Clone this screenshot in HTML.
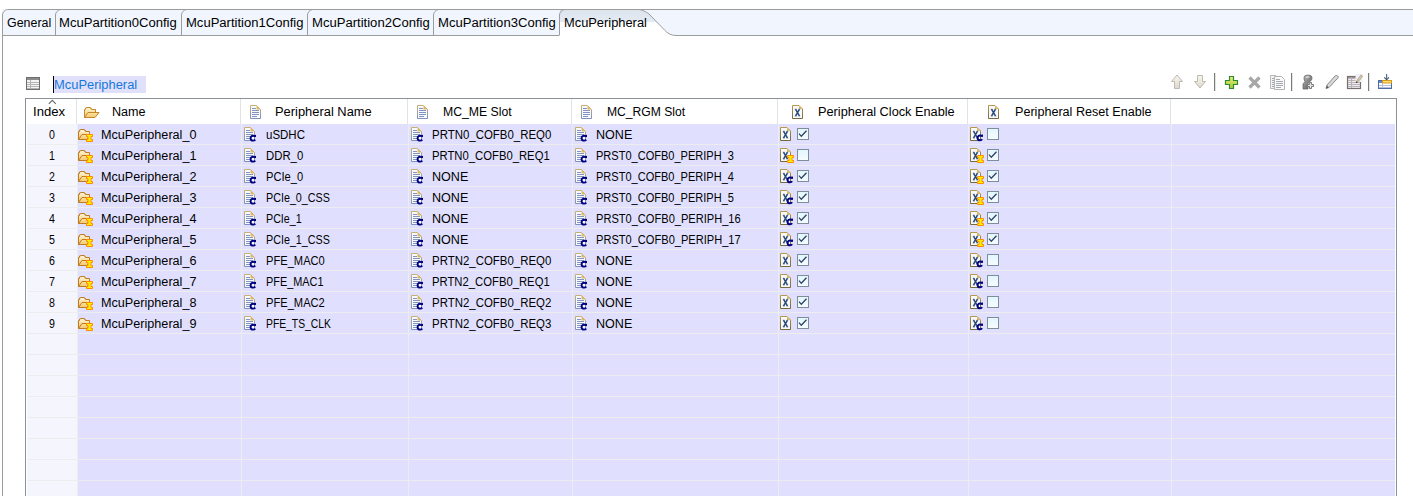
<!DOCTYPE html>
<html><head><meta charset="utf-8">
<style>
html,body{margin:0;padding:0;}
body{width:1413px;height:496px;overflow:hidden;background:#fff;position:relative;font-family:"Liberation Sans",sans-serif;font-size:12px;}
.t{position:absolute;white-space:pre;line-height:14px;height:14px;transform-origin:0 0;color:#000;}
.a{position:absolute;}
svg{position:absolute;overflow:visible;}
</style></head><body>

<svg width="0" height="0" style="position:absolute;left:0;top:0">
<defs>
<linearGradient id="fold" x1="0" y1="0" x2="0" y2="1"><stop offset="0" stop-color="#FFF8DC"/><stop offset="1" stop-color="#F0C060"/></linearGradient>
<linearGradient id="fold2" x1="0" y1="0" x2="0" y2="1"><stop offset="0" stop-color="#FBE3A0"/><stop offset="1" stop-color="#F2C870"/></linearGradient>
<linearGradient id="docb" x1="0" y1="0" x2="0" y2="1"><stop offset="0" stop-color="#C8B070"/><stop offset="1" stop-color="#8090B8"/></linearGradient>
<linearGradient id="xb" x1="0" y1="0" x2="0" y2="1"><stop offset="0" stop-color="#B89848"/><stop offset="1" stop-color="#7A6838"/></linearGradient>
<linearGradient id="cbg" x1="0" y1="0" x2="0" y2="1"><stop offset="0" stop-color="#E2F6FE"/><stop offset="1" stop-color="#F6FCFF"/></linearGradient>
<linearGradient id="arr" x1="0" y1="0" x2="0" y2="1"><stop offset="0" stop-color="#F8F6F0"/><stop offset="1" stop-color="#DCD8CC"/></linearGradient>
<linearGradient id="plusg" x1="0" y1="0" x2="0" y2="1"><stop offset="0" stop-color="#E8F070"/><stop offset="1" stop-color="#A8C838"/></linearGradient>
<linearGradient id="stampg" x1="0" y1="0" x2="1" y2="1"><stop offset="0" stop-color="#C0C0C0"/><stop offset="1" stop-color="#505050"/></linearGradient>

<g id="ibadge">
<path d="M0.5,0.5 H6.5 V2.5 H5 V5.5 H6.5 V7.5 H0.5 V5.5 H2 V2.5 H0.5 Z" fill="#FFF000" stroke="#FF8C00" stroke-width="1"/>
</g>
<g id="cbadge">
<path d="M5.6,1.9 C5.1,1.2 4.4,0.9 3.5,0.9 C2,0.9 1,1.9 1,3.3 C1,4.8 2,5.7 3.5,5.7 C4.4,5.7 5.1,5.4 5.6,4.7" fill="none" stroke="#000080" stroke-width="1.9"/>
<rect x="5" y="0" width="1.4" height="2.2" fill="#000080"/>
</g>
<g id="folderI">
<path d="M0.5,10.5 V2.5 H1.5 V1 H2.5 V0.5 H6.5 V1.5 H7.5 V2.5 H11.5 V5" fill="url(#fold)" stroke="#C07A20" stroke-width="1"/>
<path d="M0.5,10.5 L4,5.5 H12.5 L9,10.5 Z" fill="url(#fold2)" stroke="#C07A20" stroke-width="1"/>
<g transform="translate(8,5)"><use href="#ibadge"/></g>
</g>
<g id="folderO">
<path d="M0.5,10.5 V2.5 H1.5 V1 H2.5 V0.5 H6.5 V1.5 H7.5 V2.5 H11.5 V5" fill="url(#fold)" stroke="#C8862A" stroke-width="1"/>
<path d="M0.5,10.5 L4,5.5 H15 L11,10.5 Z" fill="url(#fold2)" stroke="#C8862A" stroke-width="1"/>
</g>
<g id="doc">
<path d="M0.5,0.5 H6.5 L10.5,4.5 V13.5 H0.5 Z" fill="#F8FAFF" stroke="url(#docb)" stroke-width="1"/>
<path d="M6.5,0.5 V4.5 H10.5 Z" fill="#E2B860"/>
<g fill="#8094C0"><rect x="2" y="3" width="4" height="1"/><rect x="2" y="5" width="7" height="1"/><rect x="2" y="7" width="7" height="1"/><rect x="2" y="9" width="7" height="1"/><rect x="2" y="11" width="5" height="1"/></g>
</g>
<g id="docc">
<use href="#doc"/>
<g transform="translate(5.6,7.9)"><use href="#cbadge"/></g>
</g>
<g id="xdoc">
<path d="M0.5,0.5 H7 L10.5,4 V13.5 H0.5 Z" fill="#F6FAFF" stroke="url(#xb)" stroke-width="1"/>
<path d="M7,0.5 V4 H10.5 Z" fill="#E0B860"/>
<path d="M3.6,4.4 L7.4,10.8 M7.4,4.4 L3.6,10.8" stroke="#2A4A78" stroke-width="1.5" fill="none"/><path d="M2.8,4.3 H4.6 M6.6,4.3 H8.2 M2.8,10.9 H4.6 M6.6,10.9 H8.2" stroke="#2A4A78" stroke-width="0.8"/>
</g>
<g id="xdocc">
<use href="#xdoc"/>
<g transform="translate(6.6,7.6)"><use href="#cbadge"/></g>
</g>
<g id="xdocI">
<use href="#xdoc"/>
<g transform="translate(7,7)"><use href="#ibadge"/></g>
</g>
<g id="cbox">
<rect x="0.5" y="0.5" width="11" height="11" fill="url(#cbg)" stroke="#7E8C9C" stroke-width="1"/>
</g>
<g id="cboxc">
<use href="#cbox"/>
<path d="M2,5.6 L4.3,8.3 L9.5,2.8" fill="none" stroke="#2C4464" stroke-width="1.3"/>
</g>
</defs></svg>

<svg width="1413" height="40" style="top:0;left:0">
<defs><linearGradient id="selg" x1="0" y1="0" x2="0" y2="1"><stop offset="0" stop-color="#DCE4EE"/><stop offset="1" stop-color="#E4EAF2"/></linearGradient></defs>
<rect x="2" y="9" width="1411" height="27" fill="#F1F6FE"/>
<path d="M559.5,36 L559.5,15 C559.5,12.5 561.5,10 564.5,9.5 L639,9.5 C642,10 645,11 649,14 L664.5,30 C667,33 671,35.5 676,35.5 L676,36 Z" fill="#fff"/>
<path d="M560,10 L639,10 C642,10.5 645,11.5 649,14.5 L657,22 L560,22 Z" fill="url(#selg)"/>
<g fill="none" stroke="#9C9C9C" stroke-width="1">
<path d="M2.5,496 L2.5,15 C2.5,12.5 4.5,10 7.5,9.5 L1413,9.5"/>
<path d="M55.5,35 L55.5,15 C55.5,12.5 57.5,10 60.5,9.5"/>
<path d="M181.5,35 L181.5,15 C181.5,12.5 183.5,10 186.5,9.5"/>
<path d="M307.5,35 L307.5,15 C307.5,12.5 309.5,10 312.5,9.5"/>
<path d="M433.5,35 L433.5,15 C433.5,12.5 435.5,10 438.5,9.5"/>
<path d="M559.5,35 L559.5,15 C559.5,12.5 561.5,10 564.5,9.5"/>
<path d="M639,9.5 C642,10 645,11 649,14 L664.5,30 C667,33 671,35.5 676,35.5 L1413,35.5"/>
<path d="M2.5,35.5 L559.5,35.5"/><path d="M559.5,35 V15"/>
</g>
</svg>
<svg width="16" height="16" style="left:26px;top:77px" shape-rendering="crispEdges">
<rect x="0.5" y="0.5" width="13" height="12" fill="#F4F4F4" stroke="#6E6E6E"/>
<rect x="1" y="1" width="12" height="2" fill="#8C8C8C"/>
<g fill="#B4B4B4"><rect x="1" y="5" width="12" height="1"/><rect x="1" y="7" width="12" height="1"/><rect x="1" y="9" width="12" height="1"/><rect x="1" y="11" width="12" height="1"/><rect x="4" y="3" width="1" height="9"/></g>
</svg>
<div class="a" style="left:54px;top:76px;width:92px;height:17px;background:#E0E0FA"></div>
<div class="a" style="left:53px;top:76px;width:1px;height:17px;background:#000"></div>

<svg style="left:1165px;top:70px" width="240" height="24">
<!-- up arrow at 1171..1183, y75..89 -->
<path d="M6.5,11.5 L12,5 L17.5,11.5 H14.5 V18.5 H9.5 V11.5 Z" fill="url(#arr)" stroke="#BEBAB0" stroke-width="1"/>
<!-- down arrow -->
<path d="M29.5,11.5 L35,18 L40.5,11.5 H37.5 V5.5 H32.5 V11.5 Z" fill="url(#arr)" stroke="#BEBAB0" stroke-width="1"/>
<rect x="49" y="3" width="1.2" height="18" fill="#7A7A7A"/>
<!-- plus 1225..1237, 76..88 -->
<path d="M64.5,6.5 H68.5 V10.5 H72.5 V14.5 H68.5 V18.5 H64.5 V14.5 H60.5 V10.5 H64.5 Z" fill="url(#plusg)" stroke="#2E8A3A" stroke-width="1.2"/>
<!-- gray X 1248..1261 -->
<path d="M84.5,7.5 L94.5,17.5 M94.5,7.5 L84.5,17.5" stroke="#A8A8A8" stroke-width="3.2" fill="none"/>
<!-- copy 1270..1285 -->
<path d="M5.5,5.5 H11 L13,7.5 V18.5 H5.5 Z" transform="translate(100,0)" fill="#F4F4F4" stroke="#B8B8B8"/>
<path d="M9.5,6.5 H16.5 L19.5,9.5 V19.5 H9.5 Z" transform="translate(100,0)" fill="#FAFAFA" stroke="#B4B4B4"/>
<g fill="#A4A8B0" transform="translate(100,0)"><rect x="7" y="8" width="2" height="1"/><rect x="7" y="10" width="2" height="1"/><rect x="7" y="12" width="2" height="1"/><rect x="7" y="14" width="2" height="1"/><rect x="7" y="16" width="2" height="1"/><rect x="11" y="9" width="4" height="1"/><rect x="11" y="11" width="7" height="1"/><rect x="11" y="13" width="7" height="1"/><rect x="11" y="15" width="7" height="1"/><rect x="11" y="17" width="5" height="1"/></g>
</svg>
<svg style="left:1285px;top:70px" width="120" height="24">
<rect x="6" y="3" width="1.2" height="18" fill="#7A7A7A"/>
<!-- stamp 1303..1315 -->
<path d="M19,7.5 Q19,5 23,5 Q27,5 27,7.5 Q27,10 25.5,11 L23,13.5 V19 H18 V14 L20,11.5 Q19,10.5 19,7.5 Z" fill="url(#stampg)" stroke="#6A6A6A" stroke-width="0.8"/>
<ellipse cx="22.5" cy="7" rx="2" ry="1.2" fill="#C8C8C8"/>
<path d="M24.5,12.5 H26.5 V14.5 H28.5 V16.5 H26.5 V18.5 H24.5 V16.5 H22.5 V14.5 H24.5 Z" fill="#E4E4E4" stroke="#7A7A7A" stroke-width="1"/>
<!-- pencil 1325..1338 -->
<path d="M41,18.5 L42,15 L50,6 C51,5 52.5,5.5 53,6.5 C53.5,7.5 53,8.5 52,9 L44,17.5 Z" fill="#D8D8D8" stroke="#8A8A8A" stroke-width="1"/>
<path d="M41,18.5 L42,15.6 L43.6,17.6 Z" fill="#505050"/>
<!-- table edit 1347..1362 -->
<rect x="62.5" y="6.5" width="13" height="12" fill="#ECECF6" stroke="#776E6E" stroke-width="1.2"/>
<rect x="63" y="7" width="8" height="1.6" fill="#A09494"/>
<g fill="#B8ACAC"><rect x="63" y="10" width="12" height="0.9"/><rect x="63" y="12" width="12" height="0.9"/><rect x="63" y="14" width="12" height="0.9"/><rect x="63" y="16" width="12" height="0.9"/><rect x="66" y="7" width="0.9" height="11"/></g>
<rect x="70.5" y="4" width="7" height="8" fill="#F0F0FA"/>
<path d="M71.5,12.3 L72.2,10 L76,5 L77.6,6.2 L73.8,11.2 Z" fill="#D8CCA8" stroke="#A09478" stroke-width="0.7"/>
<circle cx="71.6" cy="12.2" r="0.8" fill="#303030"/>
<rect x="83" y="3" width="1.2" height="18" fill="#7A7A7A"/>
<!-- import table 1378..1392, 74..89 -->
<rect x="101" y="4" width="1.2" height="5" fill="#50709A"/>
<path d="M99.2,7.4 L101.6,9.8 L104,7.4" stroke="#445468" stroke-width="1.1" fill="none"/>
<rect x="93.5" y="10.5" width="13" height="8" fill="#FFFFFF" stroke="#4E6CA4" stroke-width="1"/>
<rect x="94" y="11" width="3.5" height="2" fill="#6A88C0"/>
<rect x="97.5" y="10.5" width="9" height="2.5" fill="#F6E468" stroke="#D8961E" stroke-width="1"/>
<g fill="#B4C0D8"><rect x="94" y="15" width="12" height="1"/><rect x="94" y="17" width="12" height="1"/><rect x="97" y="13" width="1" height="5"/></g>
</svg>

<div class="a" style="left:25px;top:98px;width:1372px;height:398px;border:1px solid #8C9099;border-bottom:none;box-sizing:border-box;background:#fff"></div>
<div class="a" style="left:76px;top:99px;width:1px;height:25px;background:#E3E3E3"></div><div class="a" style="left:240px;top:99px;width:1px;height:25px;background:#E3E3E3"></div><div class="a" style="left:407px;top:99px;width:1px;height:25px;background:#E3E3E3"></div><div class="a" style="left:571px;top:99px;width:1px;height:25px;background:#E3E3E3"></div><div class="a" style="left:777px;top:99px;width:1px;height:25px;background:#E3E3E3"></div><div class="a" style="left:967px;top:99px;width:1px;height:25px;background:#E3E3E3"></div><div class="a" style="left:1170px;top:99px;width:1px;height:25px;background:#E3E3E3"></div><div class="a" style="left:27px;top:124px;width:50px;height:372px;background:#F5F5FE"></div><div class="a" style="left:78px;top:124px;width:1317px;height:372px;background:#E0E0FE"></div><div class="a" style="left:77px;top:124px;width:1px;height:372px;background:#EDEDEF"></div><div class="a" style="left:241px;top:124px;width:1px;height:372px;background:#EDEDEF"></div><div class="a" style="left:408px;top:124px;width:1px;height:372px;background:#EDEDEF"></div><div class="a" style="left:572px;top:124px;width:1px;height:372px;background:#EDEDEF"></div><div class="a" style="left:778px;top:124px;width:1px;height:372px;background:#EDEDEF"></div><div class="a" style="left:968px;top:124px;width:1px;height:372px;background:#EDEDEF"></div><div class="a" style="left:1171px;top:124px;width:1px;height:372px;background:#EDEDEF"></div><div class="a" style="left:27px;top:144px;width:1368px;height:1px;background:#EDEDEF"></div><div class="a" style="left:27px;top:165px;width:1368px;height:1px;background:#EDEDEF"></div><div class="a" style="left:27px;top:186px;width:1368px;height:1px;background:#EDEDEF"></div><div class="a" style="left:27px;top:207px;width:1368px;height:1px;background:#EDEDEF"></div><div class="a" style="left:27px;top:228px;width:1368px;height:1px;background:#EDEDEF"></div><div class="a" style="left:27px;top:249px;width:1368px;height:1px;background:#EDEDEF"></div><div class="a" style="left:27px;top:270px;width:1368px;height:1px;background:#EDEDEF"></div><div class="a" style="left:27px;top:291px;width:1368px;height:1px;background:#EDEDEF"></div><div class="a" style="left:27px;top:312px;width:1368px;height:1px;background:#EDEDEF"></div><div class="a" style="left:27px;top:333px;width:1368px;height:1px;background:#EDEDEF"></div><div class="a" style="left:27px;top:354px;width:1368px;height:1px;background:#EDEDEF"></div><div class="a" style="left:27px;top:375px;width:1368px;height:1px;background:#EDEDEF"></div><div class="a" style="left:27px;top:396px;width:1368px;height:1px;background:#EDEDEF"></div><div class="a" style="left:27px;top:417px;width:1368px;height:1px;background:#EDEDEF"></div><div class="a" style="left:27px;top:438px;width:1368px;height:1px;background:#EDEDEF"></div><div class="a" style="left:27px;top:459px;width:1368px;height:1px;background:#EDEDEF"></div><div class="a" style="left:27px;top:480px;width:1368px;height:1px;background:#EDEDEF"></div><div class="a" style="left:27px;top:501px;width:1368px;height:1px;background:#EDEDEF"></div>
<svg width="10" height="6" style="left:48px;top:99px"><path d="M0.8,4.8 L4.3,1.3 L7.8,4.8" fill="none" stroke="#6A6A6A" stroke-width="1.1"/></svg>
<svg style="left:84px;top:107px" width="16" height="16"><use href="#folderO"/></svg><svg style="left:250px;top:105px" width="16" height="16"><use href="#doc"/></svg><svg style="left:417px;top:105px" width="16" height="16"><use href="#doc"/></svg><svg style="left:581px;top:105px" width="16" height="16"><use href="#doc"/></svg><svg style="left:792px;top:105px" width="16" height="16"><use href="#xdoc"/></svg><svg style="left:988px;top:105px" width="16" height="16"><use href="#xdoc"/></svg><svg style="left:78px;top:129px" width="16" height="16"><use href="#folderI"/></svg><svg style="left:244px;top:127px" width="16" height="16"><use href="#docc"/></svg><svg style="left:411px;top:127px" width="16" height="16"><use href="#docc"/></svg><svg style="left:575px;top:127px" width="16" height="16"><use href="#docc"/></svg><svg style="left:780px;top:127px" width="16" height="16"><use href="#xdoc"/></svg><svg style="left:797px;top:128px" width="16" height="16"><use href="#cboxc"/></svg><svg style="left:970px;top:127px" width="16" height="16"><use href="#xdocc"/></svg><svg style="left:987px;top:128px" width="16" height="16"><use href="#cbox"/></svg><svg style="left:78px;top:150px" width="16" height="16"><use href="#folderI"/></svg><svg style="left:244px;top:148px" width="16" height="16"><use href="#docc"/></svg><svg style="left:411px;top:148px" width="16" height="16"><use href="#docc"/></svg><svg style="left:575px;top:148px" width="16" height="16"><use href="#docc"/></svg><svg style="left:780px;top:148px" width="16" height="16"><use href="#xdocI"/></svg><svg style="left:797px;top:149px" width="16" height="16"><use href="#cbox"/></svg><svg style="left:970px;top:148px" width="16" height="16"><use href="#xdocI"/></svg><svg style="left:987px;top:149px" width="16" height="16"><use href="#cboxc"/></svg><svg style="left:78px;top:171px" width="16" height="16"><use href="#folderI"/></svg><svg style="left:244px;top:169px" width="16" height="16"><use href="#docc"/></svg><svg style="left:411px;top:169px" width="16" height="16"><use href="#docc"/></svg><svg style="left:575px;top:169px" width="16" height="16"><use href="#docc"/></svg><svg style="left:780px;top:169px" width="16" height="16"><use href="#xdocc"/></svg><svg style="left:797px;top:170px" width="16" height="16"><use href="#cboxc"/></svg><svg style="left:970px;top:169px" width="16" height="16"><use href="#xdocI"/></svg><svg style="left:987px;top:170px" width="16" height="16"><use href="#cboxc"/></svg><svg style="left:78px;top:192px" width="16" height="16"><use href="#folderI"/></svg><svg style="left:244px;top:190px" width="16" height="16"><use href="#docc"/></svg><svg style="left:411px;top:190px" width="16" height="16"><use href="#docc"/></svg><svg style="left:575px;top:190px" width="16" height="16"><use href="#docc"/></svg><svg style="left:780px;top:190px" width="16" height="16"><use href="#xdocc"/></svg><svg style="left:797px;top:191px" width="16" height="16"><use href="#cboxc"/></svg><svg style="left:970px;top:190px" width="16" height="16"><use href="#xdocI"/></svg><svg style="left:987px;top:191px" width="16" height="16"><use href="#cboxc"/></svg><svg style="left:78px;top:213px" width="16" height="16"><use href="#folderI"/></svg><svg style="left:244px;top:211px" width="16" height="16"><use href="#docc"/></svg><svg style="left:411px;top:211px" width="16" height="16"><use href="#docc"/></svg><svg style="left:575px;top:211px" width="16" height="16"><use href="#docc"/></svg><svg style="left:780px;top:211px" width="16" height="16"><use href="#xdocc"/></svg><svg style="left:797px;top:212px" width="16" height="16"><use href="#cboxc"/></svg><svg style="left:970px;top:211px" width="16" height="16"><use href="#xdocI"/></svg><svg style="left:987px;top:212px" width="16" height="16"><use href="#cboxc"/></svg><svg style="left:78px;top:234px" width="16" height="16"><use href="#folderI"/></svg><svg style="left:244px;top:232px" width="16" height="16"><use href="#docc"/></svg><svg style="left:411px;top:232px" width="16" height="16"><use href="#docc"/></svg><svg style="left:575px;top:232px" width="16" height="16"><use href="#docc"/></svg><svg style="left:780px;top:232px" width="16" height="16"><use href="#xdocc"/></svg><svg style="left:797px;top:233px" width="16" height="16"><use href="#cboxc"/></svg><svg style="left:970px;top:232px" width="16" height="16"><use href="#xdocI"/></svg><svg style="left:987px;top:233px" width="16" height="16"><use href="#cboxc"/></svg><svg style="left:78px;top:255px" width="16" height="16"><use href="#folderI"/></svg><svg style="left:244px;top:253px" width="16" height="16"><use href="#docc"/></svg><svg style="left:411px;top:253px" width="16" height="16"><use href="#docc"/></svg><svg style="left:575px;top:253px" width="16" height="16"><use href="#docc"/></svg><svg style="left:780px;top:253px" width="16" height="16"><use href="#xdoc"/></svg><svg style="left:797px;top:254px" width="16" height="16"><use href="#cboxc"/></svg><svg style="left:970px;top:253px" width="16" height="16"><use href="#xdocc"/></svg><svg style="left:987px;top:254px" width="16" height="16"><use href="#cbox"/></svg><svg style="left:78px;top:276px" width="16" height="16"><use href="#folderI"/></svg><svg style="left:244px;top:274px" width="16" height="16"><use href="#docc"/></svg><svg style="left:411px;top:274px" width="16" height="16"><use href="#docc"/></svg><svg style="left:575px;top:274px" width="16" height="16"><use href="#docc"/></svg><svg style="left:780px;top:274px" width="16" height="16"><use href="#xdoc"/></svg><svg style="left:797px;top:275px" width="16" height="16"><use href="#cboxc"/></svg><svg style="left:970px;top:274px" width="16" height="16"><use href="#xdocc"/></svg><svg style="left:987px;top:275px" width="16" height="16"><use href="#cbox"/></svg><svg style="left:78px;top:297px" width="16" height="16"><use href="#folderI"/></svg><svg style="left:244px;top:295px" width="16" height="16"><use href="#docc"/></svg><svg style="left:411px;top:295px" width="16" height="16"><use href="#docc"/></svg><svg style="left:575px;top:295px" width="16" height="16"><use href="#docc"/></svg><svg style="left:780px;top:295px" width="16" height="16"><use href="#xdoc"/></svg><svg style="left:797px;top:296px" width="16" height="16"><use href="#cboxc"/></svg><svg style="left:970px;top:295px" width="16" height="16"><use href="#xdocc"/></svg><svg style="left:987px;top:296px" width="16" height="16"><use href="#cbox"/></svg><svg style="left:78px;top:318px" width="16" height="16"><use href="#folderI"/></svg><svg style="left:244px;top:316px" width="16" height="16"><use href="#docc"/></svg><svg style="left:411px;top:316px" width="16" height="16"><use href="#docc"/></svg><svg style="left:575px;top:316px" width="16" height="16"><use href="#docc"/></svg><svg style="left:780px;top:316px" width="16" height="16"><use href="#xdoc"/></svg><svg style="left:797px;top:317px" width="16" height="16"><use href="#cboxc"/></svg><svg style="left:970px;top:316px" width="16" height="16"><use href="#xdocc"/></svg><svg style="left:987px;top:317px" width="16" height="16"><use href="#cbox"/></svg>
<div class="t" style="left:6.50px;top:16.44px;transform:scaleX(1.0351);color:#000">General</div><div class="t" style="left:59.40px;top:16.44px;transform:scaleX(1.0896);color:#000">McuPartition0Config</div><div class="t" style="left:185.70px;top:16.44px;transform:scaleX(1.0877);color:#000">McuPartition1Config</div><div class="t" style="left:311.70px;top:16.44px;transform:scaleX(1.0896);color:#000">McuPartition2Config</div><div class="t" style="left:437.80px;top:16.44px;transform:scaleX(1.0896);color:#000">McuPartition3Config</div><div class="t" style="left:563.80px;top:16.44px;transform:scaleX(1.0717);color:#000">McuPeripheral</div><div class="t" style="left:54.20px;top:78.44px;transform:scaleX(1.0756);color:#1478DC">McuPeripheral</div><div class="t" style="left:32.71px;top:104.84px;transform:scaleX(1.0933);color:#000">Index</div><div class="t" style="left:111.60px;top:104.84px;transform:scaleX(1.0484);color:#000">Name</div><div class="t" style="left:275.40px;top:104.84px;transform:scaleX(1.0745);color:#000">Peripheral Name</div><div class="t" style="left:442.60px;top:104.84px;transform:scaleX(1.0204);color:#000">MC_ME Slot</div><div class="t" style="left:606.60px;top:104.84px;transform:scaleX(1.0101);color:#000">MC_RGM Slot</div><div class="t" style="left:818.30px;top:104.84px;transform:scaleX(1.0615);color:#000">Peripheral Clock Enable</div><div class="t" style="left:1014.50px;top:104.84px;transform:scaleX(1.0498);color:#000">Peripheral Reset Enable</div><div class="t" style="left:49.20px;top:127.84px;transform:scaleX(0.8857);color:#000">0</div><div class="t" style="left:101.30px;top:127.84px;transform:scaleX(1.0523);color:#000">McuPeripheral_0</div><div class="t" style="left:265.60px;top:127.84px;transform:scaleX(0.9583);color:#000">uSDHC</div><div class="t" style="left:432.40px;top:127.84px;transform:scaleX(0.9531);color:#000">PRTN0_COFB0_REQ0</div><div class="t" style="left:596.30px;top:127.84px;transform:scaleX(1.0471);color:#000">NONE</div><div class="t" style="left:49.20px;top:148.84px;transform:scaleX(0.8857);color:#000">1</div><div class="t" style="left:101.30px;top:148.84px;transform:scaleX(1.0523);color:#000">McuPeripheral_1</div><div class="t" style="left:265.60px;top:148.84px;transform:scaleX(0.9453);color:#000">DDR_0</div><div class="t" style="left:432.40px;top:148.84px;transform:scaleX(0.9404);color:#000">PRTN0_COFB0_REQ1</div><div class="t" style="left:596.30px;top:148.84px;transform:scaleX(0.9190);color:#000">PRST0_COFB0_PERIPH_3</div><div class="t" style="left:49.20px;top:169.84px;transform:scaleX(0.8857);color:#000">2</div><div class="t" style="left:101.30px;top:169.84px;transform:scaleX(1.0523);color:#000">McuPeripheral_2</div><div class="t" style="left:265.60px;top:169.84px;transform:scaleX(0.9269);color:#000">PCIe_0</div><div class="t" style="left:432.40px;top:169.84px;transform:scaleX(1.0471);color:#000">NONE</div><div class="t" style="left:596.30px;top:169.84px;transform:scaleX(0.9190);color:#000">PRST0_COFB0_PERIPH_4</div><div class="t" style="left:49.20px;top:190.84px;transform:scaleX(0.8857);color:#000">3</div><div class="t" style="left:101.30px;top:190.84px;transform:scaleX(1.0523);color:#000">McuPeripheral_3</div><div class="t" style="left:265.60px;top:190.84px;transform:scaleX(0.8953);color:#000">PCIe_0_CSS</div><div class="t" style="left:432.40px;top:190.84px;transform:scaleX(1.0471);color:#000">NONE</div><div class="t" style="left:596.30px;top:190.84px;transform:scaleX(0.9190);color:#000">PRST0_COFB0_PERIPH_5</div><div class="t" style="left:49.20px;top:211.84px;transform:scaleX(0.8857);color:#000">4</div><div class="t" style="left:101.30px;top:211.84px;transform:scaleX(1.0523);color:#000">McuPeripheral_4</div><div class="t" style="left:265.60px;top:211.84px;transform:scaleX(0.8922);color:#000">PCIe_1</div><div class="t" style="left:432.40px;top:211.84px;transform:scaleX(1.0471);color:#000">NONE</div><div class="t" style="left:596.30px;top:211.84px;transform:scaleX(0.9232);color:#000">PRST0_COFB0_PERIPH_16</div><div class="t" style="left:49.20px;top:232.84px;transform:scaleX(0.8857);color:#000">5</div><div class="t" style="left:101.30px;top:232.84px;transform:scaleX(1.0523);color:#000">McuPeripheral_5</div><div class="t" style="left:265.60px;top:232.84px;transform:scaleX(0.8953);color:#000">PCIe_1_CSS</div><div class="t" style="left:432.40px;top:232.84px;transform:scaleX(1.0471);color:#000">NONE</div><div class="t" style="left:596.30px;top:232.84px;transform:scaleX(0.9232);color:#000">PRST0_COFB0_PERIPH_17</div><div class="t" style="left:49.20px;top:253.84px;transform:scaleX(0.8857);color:#000">6</div><div class="t" style="left:101.30px;top:253.84px;transform:scaleX(1.0523);color:#000">McuPeripheral_6</div><div class="t" style="left:265.60px;top:253.84px;transform:scaleX(0.9281);color:#000">PFE_MAC0</div><div class="t" style="left:432.40px;top:253.84px;transform:scaleX(0.9531);color:#000">PRTN2_COFB0_REQ0</div><div class="t" style="left:596.30px;top:253.84px;transform:scaleX(1.0471);color:#000">NONE</div><div class="t" style="left:49.20px;top:274.84px;transform:scaleX(0.8857);color:#000">7</div><div class="t" style="left:101.30px;top:274.84px;transform:scaleX(1.0523);color:#000">McuPeripheral_7</div><div class="t" style="left:265.60px;top:274.84px;transform:scaleX(0.9077);color:#000">PFE_MAC1</div><div class="t" style="left:432.40px;top:274.84px;transform:scaleX(0.9404);color:#000">PRTN2_COFB0_REQ1</div><div class="t" style="left:596.30px;top:274.84px;transform:scaleX(1.0471);color:#000">NONE</div><div class="t" style="left:49.20px;top:295.84px;transform:scaleX(0.8857);color:#000">8</div><div class="t" style="left:101.30px;top:295.84px;transform:scaleX(1.0523);color:#000">McuPeripheral_8</div><div class="t" style="left:265.60px;top:295.84px;transform:scaleX(0.9281);color:#000">PFE_MAC2</div><div class="t" style="left:432.40px;top:295.84px;transform:scaleX(0.9531);color:#000">PRTN2_COFB0_REQ2</div><div class="t" style="left:596.30px;top:295.84px;transform:scaleX(1.0471);color:#000">NONE</div><div class="t" style="left:49.20px;top:316.84px;transform:scaleX(0.8857);color:#000">9</div><div class="t" style="left:101.30px;top:316.84px;transform:scaleX(1.0523);color:#000">McuPeripheral_9</div><div class="t" style="left:265.60px;top:316.84px;transform:scaleX(0.8612);color:#000">PFE_TS_CLK</div><div class="t" style="left:432.40px;top:316.84px;transform:scaleX(0.9531);color:#000">PRTN2_COFB0_REQ3</div><div class="t" style="left:596.30px;top:316.84px;transform:scaleX(1.0471);color:#000">NONE</div>
</body></html>
